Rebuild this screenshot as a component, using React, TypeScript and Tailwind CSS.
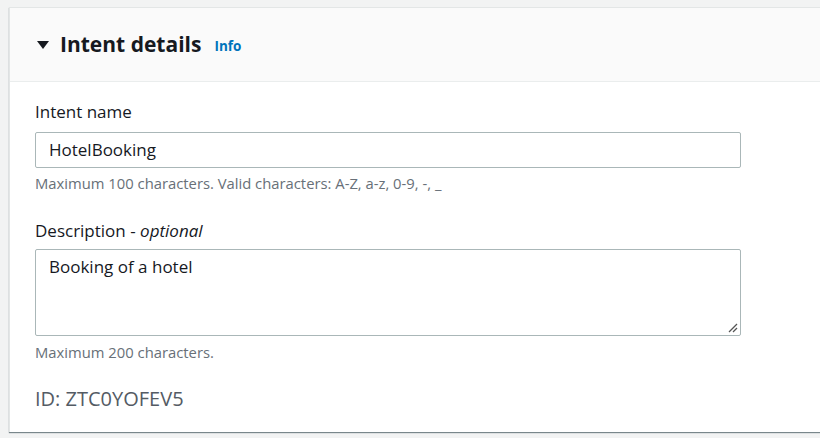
import React from 'react';

const font = { fontFamily: '"Open Sans", "Liberation Sans", sans-serif' };

const App: React.FC = () => {
  return (
    <div className="w-[820px] h-[438px] overflow-hidden bg-[#f2f3f3]" style={font}>
      <div className="ml-[9px] mt-[7px] w-[830px] bg-white border-t border-l border-[#e3e6e6] shadow-[0_1px_1px_0_rgba(0,28,36,0.5)]">
        {/* Header */}
        <div className="h-[74px] bg-[#fafafa] border-b border-[#eaeded] flex items-center pl-[27px]">
          <svg width="12" height="9" viewBox="0 0 12 9" className="mr-[11px] mt-[1px]">
            <polygon points="0,0 12,0 6,8" fill="#16191f" />
          </svg>
          <h2 className="text-[21px] font-bold text-[#16191f] leading-none">Intent details</h2>
          <a className="ml-[13px] mt-[5px] text-[13.5px] font-bold text-[#0073bb] leading-none">Info</a>
        </div>

        {/* Body */}
        <div className="pl-[25px] pt-[18px] pb-[20px]">
          <label className="block text-[17px] leading-[24px] text-[#16191f]">Intent name</label>
          <div className="mt-[8px] w-[706px] h-[36px] border border-[#aab7b8] rounded-[2px] flex items-center pl-[13px] text-[17px] text-[#16191f]">
            HotelBooking
          </div>
          <p className="mt-[5px] text-[14.8px] leading-[20px] text-[#687078]">
            Maximum 100 characters. Valid characters: A-Z, a-z, 0-9, -, _
          </p>

          <label className="block mt-[26px] text-[17px] leading-[24px] text-[#16191f]">
            Description - <span className="italic">optional</span>
          </label>
          <div className="relative mt-[6px] w-[706px] h-[87px] border border-[#aab7b8] rounded-[2px] pl-[13px] pt-[4px] text-[17px] text-[#16191f]">
            Booking of a hotel
            <svg width="10" height="10" viewBox="0 0 10 10" className="absolute right-[2px] bottom-[2px]">
              <line x1="1" y1="9" x2="9" y2="1" stroke="#555" strokeWidth="1.2" />
              <line x1="5" y1="9" x2="9" y2="5" stroke="#555" strokeWidth="1.2" />
            </svg>
          </div>
          <p className="mt-[6px] text-[14.8px] leading-[20px] text-[#687078]">Maximum 200 characters.</p>

          <p className="mt-[24px] text-[20px] leading-[26px] text-[#545b64]">ID: ZTC0YOFEV5</p>
        </div>
      </div>
    </div>
  );
};

export default App;
